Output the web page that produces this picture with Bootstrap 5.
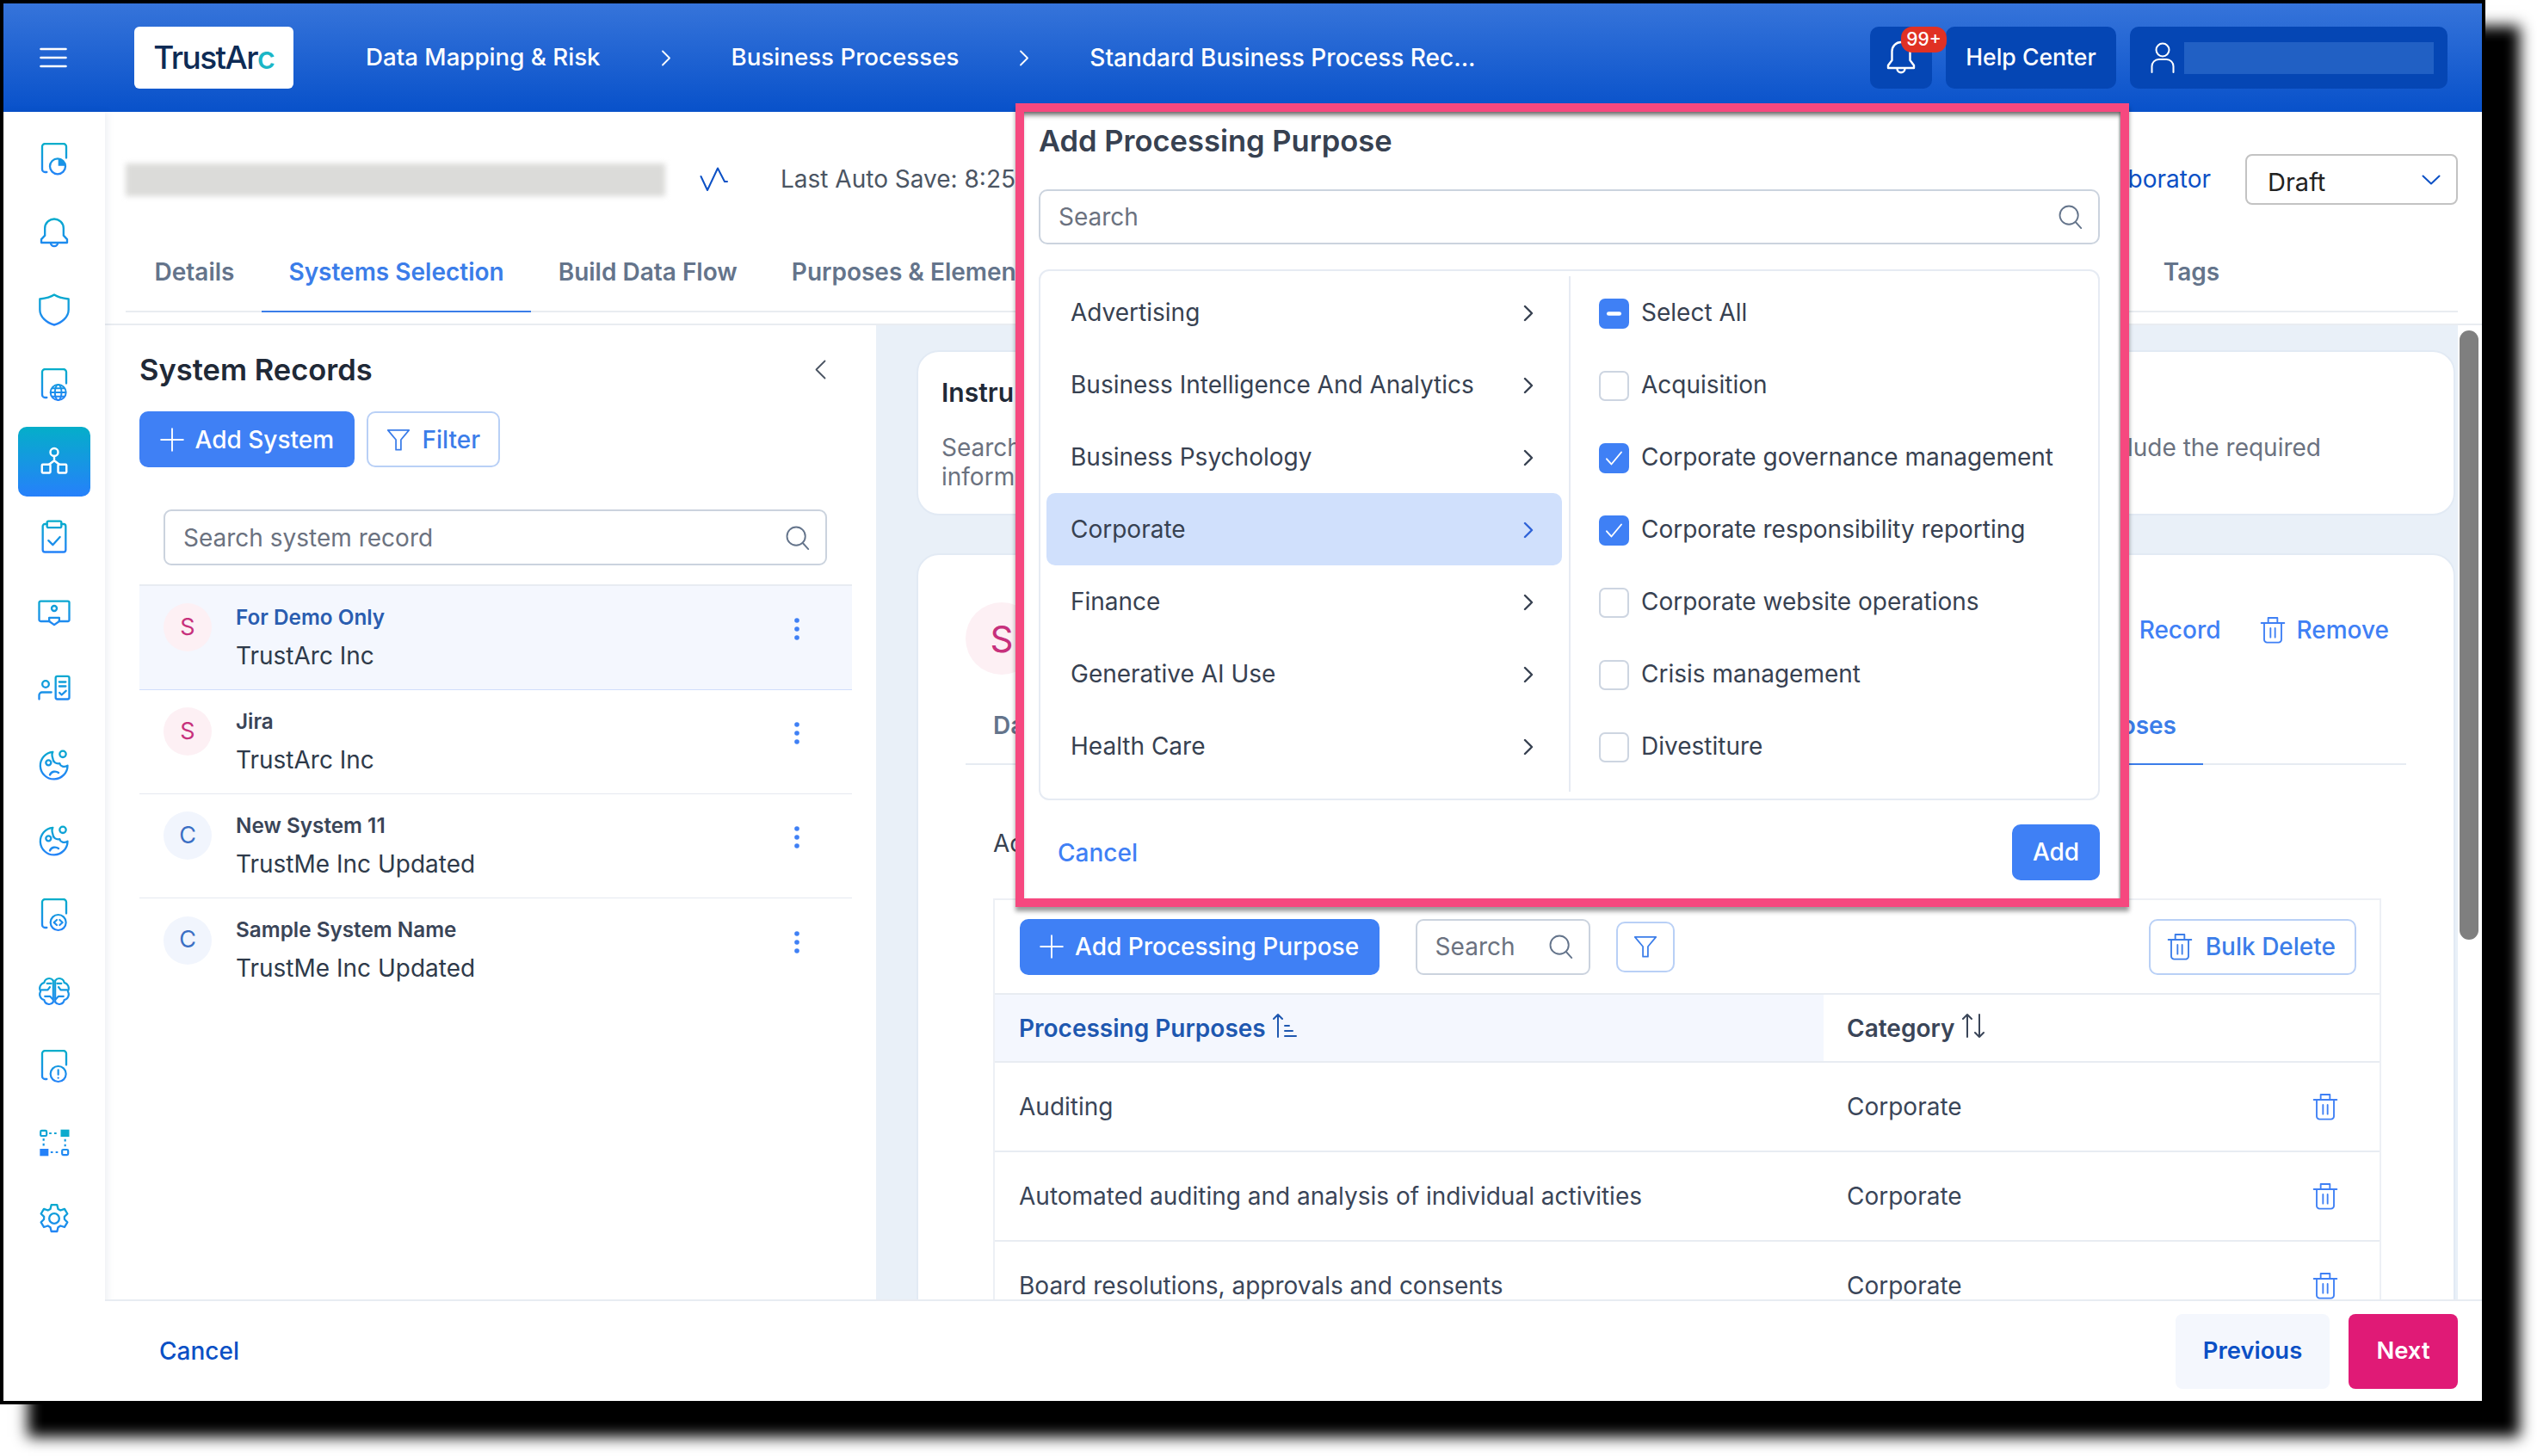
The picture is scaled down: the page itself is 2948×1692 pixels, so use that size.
<!DOCTYPE html>
<html lang="en">
<head>
  <meta charset="UTF-8" />
  <meta name="viewport" content="width=device-width, initial-scale=1">
  <title>Add Processing Purpose</title>
  <link href="https://cdn.jsdelivr.net/npm/bootstrap@5.3.3/dist/css/bootstrap.min.css" rel="stylesheet">
  <style>
    html, body { height: 100%; overflow: hidden; }
    body { background: #fff; font-family: Inter, "Noto Sans", sans-serif; font-size: 28px; color: #374151; }
    svg { display: block; flex: none; }
    .ln { fill: none; stroke: currentColor; stroke-linecap: round; stroke-linejoin: round; }
    .sprite { width: 0; height: 0; }
    .to-end { display: flex; justify-content: flex-end; white-space: nowrap; }

    .shot { width: 2888px; height: 1632px; border: 4px solid #000; box-shadow: 36px 34px 16px 4px #000; position: relative; background: #fff; overflow: hidden; }

    .topbar { height: 126px; background: linear-gradient(#3674da, #0851ca); padding: 0 40px 0 42px; color: #fff; font-weight: 500; font-size: 27.7px; }
    .crumb-last { font-size: 28px; }
    .logo-tile { width: 185px; height: 72px; margin: 0 84px 0 78px; background: #fff; border-radius: 6px; color: #0d2b55; font-size: 37px; letter-spacing: -1.6px; font-weight: 500; }
    .logo-tile b { font-weight: 500; color: #1bb6c6; }
    .crumb-sep { margin: 0 70px; }
    .bar-btn { height: 72px; background: #0546b4; border-radius: 10px; color: #fff; border: 0; font-size: 26.6px; font-weight: 500; }
    .bar-bell { width: 72px; margin-right: 16px; }
    .bar-help { width: 198px; margin-right: 16px; }
    .bar-user { width: 369px; padding-left: 24px; gap: 11px; }
    .user-blur { width: 290px; height: 37px; background: #2160c4; }
    .bar-btn .bell-count { position: absolute; top: 0; left: 36px; width: 53px; height: 30px; padding: 0; line-height: 30px; font-size: 21px; font-weight: 500; background: #e03124; border-radius: 13px; }

    .body-row { height: 1498px; }
    .rail { width: 118px; flex: none; background: #fff; padding-top: 14px; box-shadow: 3px 0 8px rgba(40, 60, 110, .08); position: relative; z-index: 1; }
    .rail-item { height: 88px; }
    .rail-item:first-child { height: 84px; }
    .rail-on { width: 84px; height: 81px; border-radius: 10px; background: linear-gradient(#05aec9, #2680fb); }

    .work { min-width: 0; }
    .head-zone { height: 248px; padding: 49px 28px 0 24px; border-bottom: 2px solid #e9ecf1; }
    .title-row { height: 59px; }
    .title-blur { width: 627px; height: 38px; background: #dbdbd9; filter: blur(3px); margin-right: 40px; flex: none; }
    .save-text { margin-left: 61px; flex: none; color: #4b5563; white-space: nowrap; margin-top: -2px; }
    .collab { margin-left: auto; margin-right: 40px; color: #0b50c5; margin-top: -2px; }
    .draft { width: 247px; height: 59px; border: 2px solid #c3c3c3; border-radius: 8px; padding: 7px 18px 0 24px; color: #222; font-size: 29px; }
    .draft svg { margin-top: -6px; color: #0b50c5; }

    .tabs-x { margin-top: 32px; height: 93px; padding-left: 2px; border-bottom: 2px solid #e9ecf1; flex-wrap: nowrap; }
    .tabs-x .nav-link { padding: 0 31.5px; height: 93px; line-height: 92px; color: #64748b; font-weight: 600; font-size: 28px; white-space: nowrap; border-bottom: 2px solid transparent; border-radius: 0; }
    .tabs-x .nav-link.active { color: #3b7de9; border-bottom-color: #3b7de9; }
    .tab-cut { width: 292px; flex: none; }
    .tab-far { margin-left: 1302px; }

    .split { height: 1132px; min-height: 0; }
    .side { width: 896px; flex: none; padding: 21px 28px 0 40px; background: #fff; }
    .side h2 { font-size: 34.5px; font-weight: 600; color: #1f2937; margin: 0; line-height: 56px; }
    .side-top { height: 61px; padding-right: 30px; margin-bottom: 18px; }
    .side-btns { gap: 14px; }
    .act-btn { height: 65px; border-radius: 10px; background: #3f80f5; border: 0; color: #fff; font-size: 28px; font-weight: 500; padding: 0 23.5px; gap: 13px; white-space: nowrap; }
    .ghost-btn { height: 65px; border-radius: 10px; background: #fff; border: 2px solid #b9d0f6; color: #3b7de9; font-size: 28px; font-weight: 500; padding: 0 21px; gap: 14px; white-space: nowrap; }
    .find { border: 2px solid #cbd3de; border-radius: 9px; background: #fff; height: 65px; color: #6b7280; padding: 0 17px 0 21px; }
    .find input { border: 0; outline: 0; padding: 0; flex: 1; min-width: 0; background: transparent; font-size: 28px; color: #374151; }
    .find input::placeholder { color: #6b7280; opacity: 1; }
    .find svg { color: #64748b; }
    .side-find { width: 771px; margin: 49px 0 22px 28px; }

    .rec-list { border-top: 2px solid #e8ecf2; }
    .rec-item { height: 121px; border: 0; border-bottom: 2px solid #e5e9f0; border-radius: 0 !important; padding: 0 0 0 28px; background: #fff; gap: 28px; }
    .rec-item.picked { background: #f4f7fe; border-bottom-color: #d0defb; }
    .rec-ava { width: 56px; height: 56px; border-radius: 50%; font-size: 27px; margin-top: -24px; }
    .ava-s { background: #fdf0f4; color: #c7317c; }
    .ava-c { background: #f1f5fd; color: #3b6fc4; }
    .rec-name { font-size: 24.3px; font-weight: 600; color: #3a4558; line-height: 30px; margin-top: 3px; }
    .picked .rec-name { color: #2a5db0; }
    .rec-org { font-size: 28px; color: #2e3a4a; line-height: 44px; margin-top: 8px; }
    .rec-more { margin: 0 60px 20px auto; color: #3f80f5; }

    .pane { background: #e9f0f8; flex: 1; min-width: 0; padding: 29px 3px 0 47px; overflow: hidden; }
    .box-a { height: 192px; background: #fff; border: 2px solid #e2eaf4; border-radius: 26px; padding: 28px 154px 0 27px; margin-bottom: 44px; }
    .box-a-start { white-space: nowrap; }
    .box-a h3 { font-size: 30px; font-weight: 600; margin: 0 0 28px; color: #1f2937; line-height: 38px; }
    .box-a p { margin: 0; font-size: 28px; line-height: 34px; color: #6b7280; }
    .box-a-end { margin-top: 66px; }
    .box-b { height: 1000px; background: #fff; border: 2px solid #e2eaf4; border-radius: 26px; padding: 55px 55px 0 55px; }
    .rec-head { height: 84px; padding-right: 20px; }
    .big-ava { width: 84px; height: 84px; border-radius: 50%; font-size: 42px; margin-right: auto; }
    .head-link { color: #3f80f5; font-weight: 500; font-size: 28px; gap: 12px; margin-left: 44px; margin-bottom: 20px; }
    .inner-tabs { height: 91px; margin-top: 14px; border-bottom: 2px solid #e6ebf2; flex-wrap: nowrap; }
    .inner-tabs .nav-link { padding: 0 0 0 32px; height: 91px; line-height: 90px; color: #64748b; font-weight: 600; font-size: 28px; border-bottom: 2px solid transparent; border-radius: 0; white-space: nowrap; }
    .inner-tabs .nav-link.active { color: #3b7de9; border-bottom-color: #3b7de9; padding: 0 31px 0 0; }
    .inner-far { width: 87px; margin-left: auto; margin-right: 236px; }
    .lead-line { margin: 74px 0 47px 32px; line-height: 34px; }

    .pp-wrap { margin: 0 29px 0 32px; border: 2px solid #edf0f5; border-bottom: 0; }
    .pp-tools { height: 108px; padding: 0 27px 0 28.5px; gap: 42px; }
    .pp-tools .find { width: 203px; margin-right: -12px; }
    .pp-tools .ghost-icon { width: 68px; height: 59px; padding: 0; }
    .pp-tools .ms-auto { padding: 0 22px 0 18px; }
    .pp-table { margin: 0; table-layout: fixed; }
    .pp-table th, .pp-table td { vertical-align: middle; padding: 0 0 0 27px; font-size: 28px; font-weight: 400; color: #3a4558; border-bottom: 2px solid #e8ecf2; box-shadow: none; }
    .pp-table th svg { margin-top: -6px; }
    .pp-table thead tr { height: 79px; }
    .pp-table thead th { font-weight: 600; border-top: 2px solid #e8ecf2; }
    .pp-table tbody tr { height: 104px; }
    .pp-table .c-one { width: 963px; padding-left: 28px; }
    .pp-table .c-end { width: 118px; color: #3f80f5; padding-left: 39px; }
    .pp-table th.sort-on { background: #f4f7fe; color: #1e58b0; }

    .scroll-strip { width: 28px; flex: none; background: #fff; padding: 6px 4px 0 2px; }
    .scroll-thumb { height: 708px; background: #7f7f7f; border-radius: 11px; }

    .foot { height: 118px; background: #fff; border-top: 2px solid #e8ecf2; padding: 0 28px 0 63px; position: relative; z-index: 1; }
    .foot-cancel { color: #0b50c5; font-weight: 500; font-size: 28px; text-decoration: none; }
    .foot-prev { width: 179px; height: 87px; margin-right: 22px; border: 0; background: #f4f7fd; color: #0b50c5; border-radius: 8px; font-size: 27.4px; font-weight: 600; }
    .foot-next { width: 127px; height: 87px; border: 0; background: #e01a76; color: #fff; border-radius: 8px; font-size: 27.4px; font-weight: 600; }

    .pp-dialog { position: absolute; left: 1176px; top: 116px; width: 1294px; height: 934px; z-index: 5; background: #fff; border: 10px solid #f6487f; border-radius: 0; padding: 0 24px 0 17px; box-shadow: inset 0 7px 6px -4px #555, inset -3px 0 3px -2px #888, 0 5px 5px rgba(0, 0, 0, .4); }
    .pp-dialog h5 { font-size: 34.5px; font-weight: 600; color: #374151; margin: 0; height: 90px; line-height: 68px; }
    .pp-dialog .find { height: 64px; border-radius: 10px; }
    .pick-box { height: 617px; margin-top: 29px; border: 2px solid #e6ebf3; border-radius: 12px; padding: 6px 0 8px; }
    .pick-left { width: 616px; flex: none; border-right: 2px solid #e6ebf3; padding: 0 8px 11px 7px; }
    .pick-cat { height: 84px; padding: 0 33px 0 28px; border-radius: 10px; color: #374151; font-size: 28px; border: 0; background: transparent; }
    .pick-cat svg { margin-top: 2px; }
    .pick-cat.on { background: #d0e0fc; }
    .pick-cat.on svg { color: #2f63d8; }
    .pick-opt { height: 84px; padding-left: 33px; gap: 14px; margin: 0; font-size: 28px; color: #374151; }
    .pick-opt .form-check-input { width: 35px; height: 35px; margin: 2px 0 0; flex: none; border: 2px solid #cdd5e1; border-radius: 7px; background-color: #fff; }
    .pick-opt .form-check-input:checked, .pick-opt .form-check-input:indeterminate { background-color: #3f80f5; border-color: #3f80f5; }
    .pick-opt .form-check-input:checked[type=checkbox] { --bs-form-check-bg-image: url("data:image/svg+xml,%3csvg xmlns='http://www.w3.org/2000/svg' viewBox='0 0 20 20'%3e%3cpath fill='none' stroke='%23fff' stroke-width='1.2' stroke-linecap='round' stroke-linejoin='round' d='M4.5 10.5l3.5 4 7.5-9'/%3e%3c/svg%3e"); }
    .dialog-foot { height: 120px; }
    .dialog-cancel { color: #3f80f5; font-weight: 500; text-decoration: none; margin: 2px 0 0 22px; }
    .dialog-add { width: 102px; height: 65px; background: #3f80f5; color: #fff; border: 0; border-radius: 10px; font-weight: 500; font-size: 28px; }
  </style>
</head>
<body>
  <svg class="sprite" aria-hidden="true">
    <defs>
      <linearGradient id="railInk" gradientUnits="userSpaceOnUse" x1="0" y1="0" x2="0" y2="24">
        <stop offset="0" stop-color="#05aec9"/><stop offset="1" stop-color="#2680fb"/>
      </linearGradient>
      <symbol id="i-chev" viewBox="0 0 12 20"><path class="ln" d="M2 2l8 8-8 8"/></symbol>
      <symbol id="i-find" viewBox="0 0 24 24"><circle class="ln" cx="10.5" cy="10.5" r="8.5" stroke-width="1.5"/><path class="ln" stroke-width="1.5" d="M16.8 17l5 5.5"/></symbol>
      <symbol id="i-funnel" viewBox="0 0 24 24"><path class="ln" stroke-width="1.5" d="M1.500 2.500h21l-8 9.500v10h-5V12z"/></symbol>
      <symbol id="i-plus" viewBox="0 0 24 24"><path class="ln" stroke-width="1.6" d="M12 1v22M1 12h22"/></symbol>
      <symbol id="i-bin" viewBox="0 0 24 24"><path class="ln" stroke-width="1.4" d="M2 6h20M8 6V1.500h8V6M4.500 6h15v14.500a2.500 2.500 0 0 1-2.500 2.500H7a2.500 2.500 0 0 1-2.500-2.500zM10 10.500v8M14 10.500v8"/></symbol>
      <symbol id="i-dots" viewBox="0 0 8 28"><circle cx="4" cy="4" r="2.800" fill="currentColor"/><circle cx="4" cy="14" r="2.800" fill="currentColor"/><circle cx="4" cy="24" r="2.800" fill="currentColor"/></symbol>
      <symbol id="i-doc" viewBox="0 0 24 24"><path fill="none" stroke="url(#railInk)" stroke-width="1.400" stroke-linecap="round" d="M6.800 20.400H5.600a2 2 0 0 1-2-2V2.600a2 2 0 0 1 2-2h12.800a2 2 0 0 1 2 2V10.500"/></symbol>
    </defs>
  </svg>

  <div class="shot">
    <header class="topbar d-flex align-items-center">
      <svg width="32" height="24" viewBox="0 0 32 24"><path class="ln" stroke-width="2.600" d="M1.500 2h29M1.500 12h29M1.500 22h29"/></svg>
      <div class="logo-tile d-flex align-items-center justify-content-center">TrustAr<b>c</b></div>
      <span>Data Mapping &amp; Risk</span>
      <svg class="crumb-sep" width="12" height="21"><use href="#i-chev" stroke-width="1.800"/></svg>
      <span>Business Processes</span>
      <svg class="crumb-sep" width="12" height="21"><use href="#i-chev" stroke-width="1.800"/></svg>
      <span class="crumb-last">Standard Business Process Rec...</span>
      <button class="btn bar-btn bar-bell ms-auto position-relative d-flex align-items-center justify-content-center p-0">
        <svg width="36" height="42" viewBox="0 0 24 28"><path class="ln" stroke-width="1.600" d="M12 2a7 7 0 0 0-7 7v7l-3 4v2h20v-2l-3-4V9a7 7 0 0 0-7-7zM9 22.500a3 3 0 0 0 6 0"/></svg>
        <span class="badge bell-count">99+</span>
      </button>
      <button class="btn bar-btn bar-help p-0">Help Center</button>
      <button class="btn bar-btn bar-user d-flex align-items-center">
        <svg width="28" height="36" viewBox="0 0 28 36"><circle class="ln" cx="14" cy="9" r="7.500" stroke-width="2"/><path class="ln" stroke-width="2" d="M1.500 35V28a8 8 0 0 1 8-8h9a8 8 0 0 1 8 8v7"/></svg>
        <span class="user-blur"></span>
      </button>
    </header>

    <div class="body-row d-flex">
      <nav class="rail d-flex flex-column align-items-center">
        <div class="rail-item d-flex align-items-center"><svg width="40" height="40" viewBox="0 0 24 24"><use href="#i-doc"/><g fill="none" stroke="url(#railInk)" stroke-width="1.400"><circle cx="14.400" cy="16.400" r="5.400"/></g><path fill="url(#railInk)" d="M14.800 16h5a5 5 0 0 0-5-5z"/></svg></div>
        <div class="rail-item d-flex align-items-center"><svg width="40" height="40" viewBox="0 0 24 24"><path fill="none" stroke="url(#railInk)" stroke-width="1.400" stroke-linejoin="round" d="M12 1.500a6.500 6.500 0 0 0-6.500 6.500v5L3 15.700v2.300h18v-2.300L18.500 13V8A6.500 6.500 0 0 0 12 1.500zM9.500 18a2.500 2.500 0 0 0 5 0"/></svg></div>
        <div class="rail-item d-flex align-items-center"><svg width="40" height="40" viewBox="0 0 24 24"><path fill="none" stroke="url(#railInk)" stroke-width="1.400" stroke-linejoin="round" d="M12 1.500C9 3.500 6 4 2 4.500V12c0 5 4.500 9 10 10.500C17.500 21 22 17 22 12V4.500C18 4 15 3.500 12 1.500z"/></svg></div>
        <div class="rail-item d-flex align-items-center"><svg width="40" height="40" viewBox="0 0 24 24"><use href="#i-doc"/><g fill="none" stroke="url(#railInk)" stroke-width="1.200"><circle cx="14.800" cy="16.800" r="5.400"/><ellipse cx="14.800" cy="16.800" rx="2.300" ry="5.400"/><path d="M9.400 16.800h10.800M10.200 14h9.200M10.200 19.600h9.200"/></g></svg></div>
        <div class="rail-item d-flex align-items-center"><div class="rail-on d-flex align-items-center justify-content-center"><svg width="36" height="36" viewBox="0 0 24 24" color="#fff"><g class="ln" stroke-width="1.600"><circle cx="12" cy="5" r="3"/><rect x="2.500" y="14.500" width="6.500" height="6.500" rx=".6"/><rect x="15" y="14.500" width="6.500" height="6.500" rx=".6"/><path d="M12 8v3.500M12 11.500l-4 3M12 11.500l4 3"/></g></svg></div></div>
        <div class="rail-item d-flex align-items-center"><svg width="40" height="40" viewBox="0 0 24 24"><g fill="none" stroke="url(#railInk)" stroke-width="1.400" stroke-linecap="round" stroke-linejoin="round"><path d="M7 3H5.500a1.500 1.500 0 0 0-1.500 1.500v16.500A1.500 1.500 0 0 0 5.500 22.500h13a1.500 1.500 0 0 0 1.500-1.500V4.500A1.500 1.500 0 0 0 18.500 3H17"/><rect x="7" y="1" width="10" height="4.500" rx="1"/><path d="M8 14.500l3 3 5-5.500"/></g></svg></div>
        <div class="rail-item d-flex align-items-center"><svg width="40" height="40" viewBox="0 0 24 24"><g fill="none" stroke="url(#railInk)" stroke-width="1.400" stroke-linecap="round" stroke-linejoin="round"><path d="M8.500 18H2.500a1 1 0 0 1-1-1V5a1 1 0 0 1 1-1h19a1 1 0 0 1 1 1v12a1 1 0 0 1-1 1h-6"/><circle cx="12" cy="9" r="1.800"/><path d="M8.500 15.500h7V18L12 20.500 8.500 18z"/></g></svg></div>
        <div class="rail-item d-flex align-items-center"><svg width="40" height="40" viewBox="0 0 24 24"><g fill="none" stroke="url(#railInk)" stroke-width="1.400" stroke-linecap="round" stroke-linejoin="round"><circle cx="6" cy="9" r="2.300"/><path d="M1.500 19.500v-2.800a2 2 0 0 1 2-2H10"/><rect x="13" y="3.500" width="9.500" height="16" rx="1.200"/><path d="M15.500 7.500h4.500M15.500 10.500h4.500M15.700 15l1.500 1.500 3-2.800"/></g></svg></div>
        <div class="rail-item d-flex align-items-center"><svg width="40" height="40" viewBox="0 0 24 24"><g fill="none" stroke="url(#railInk)" stroke-width="1.400" stroke-linecap="round" stroke-linejoin="round"><path d="M11 3.500A9.500 9.500 0 1 0 21.300 13c-2.500 1.500-5 .5-5.500-1.500-2.500.5-4.800-1-4.800-3.500-.5-1.500-1-3 0-4.500z"/><circle cx="8" cy="11" r="1.800"/><circle cx="18" cy="5" r="2.200"/><path d="M9 19.500c1-2.500 4-3 6-1.500"/></g></svg></div>
        <div class="rail-item d-flex align-items-center"><svg width="40" height="40" viewBox="0 0 24 24"><g fill="none" stroke="url(#railInk)" stroke-width="1.400" stroke-linecap="round" stroke-linejoin="round"><path d="M11 3.500A9.500 9.500 0 1 0 21.300 13c-2.500 1.500-5 .5-5.500-1.500-2.500.5-4.800-1-4.800-3.500-.5-1.500-1-3 0-4.500z"/><circle cx="8" cy="11" r="1.800"/><circle cx="18" cy="5" r="2.200"/><path d="M9 19.500c1-2.500 4-3 6-1.500"/></g></svg></div>
        <div class="rail-item d-flex align-items-center"><svg width="40" height="40" viewBox="0 0 24 24"><use href="#i-doc"/><g fill="none" stroke="url(#railInk)" stroke-width="1.300" stroke-linecap="round" stroke-linejoin="round"><circle cx="14.800" cy="16.800" r="5.400"/><path d="M13.800 15l-2 1.800 2 1.800M15.800 15l2 1.800-2 1.800"/></g></svg></div>
        <div class="rail-item d-flex align-items-center"><svg width="40" height="40" viewBox="0 0 24 24"><g fill="none" stroke="url(#railInk)" stroke-width="1.300" stroke-linecap="round" stroke-linejoin="round"><path d="M11.300 4.500a3.500 3.500 0 0 0-6.300 1.500A4 4 0 0 0 2.500 12 4 4 0 0 0 5 18a3.500 3.500 0 0 0 6.300 1.500zM12.700 4.500A3.500 3.500 0 0 1 19 6a4 4 0 0 1 2.500 6A4 4 0 0 1 19 18a3.500 3.500 0 0 1-6.300 1.500z"/><path d="M3 11h4.500l1.500-2M5.500 15.500H9l2 2M21 11h-4.500L15 9M18.500 15.500H15l-2 2M7 6.500h3M17 6.500h-3"/></g></svg></div>
        <div class="rail-item d-flex align-items-center"><svg width="40" height="40" viewBox="0 0 24 24"><use href="#i-doc"/><g fill="none" stroke="url(#railInk)" stroke-width="1.300" stroke-linecap="round"><circle cx="14.800" cy="16.800" r="5.400"/><path d="M14.800 14v3.300M14.800 19.500v.1"/></g></svg></div>
        <div class="rail-item d-flex align-items-center"><svg width="40" height="40" viewBox="0 0 24 24"><g fill="none" stroke="url(#railInk)" stroke-width="1.300"><rect x="2.500" y="3.500" width="4.200" height="3.700" rx=".8"/><rect x="17.500" y="16.800" width="4.200" height="3.700" rx=".8"/><path d="M8.500 5.400h1.600M12 5.400h1.600M9.500 18.600h1.600M13 18.600h1.600M4.600 9v1.600M4.600 12.500v1.600M19.600 9.500v1.600M19.600 13v1.600"/></g><rect x="16.500" y="2.800" width="6" height="5" fill="#0dabcd"/><rect x="2" y="16.200" width="6" height="5" fill="#2581f8"/></svg></div>
        <div class="rail-item d-flex align-items-center"><svg width="40" height="40" viewBox="0 0 24 24"><g fill="none" stroke="url(#railInk)" stroke-width="1.400" stroke-linejoin="round"><circle cx="12" cy="12" r="3.500"/><path d="M10 2.500h4l.7 2.900 1.700.9 2.800-1 2 3.400-2.100 2 .1 1.900 2 2-2 3.400-2.800-.9-1.700 1-.7 2.900h-4l-.7-2.900-1.700-1-2.800.9-2-3.400 2-2 .1-1.900-2.100-2 2-3.400 2.800 1 1.700-.9z"/></g></svg></div>
      </nav>

      <div class="work flex-grow-1 d-flex flex-column">
        <section class="head-zone">
          <div class="title-row d-flex align-items-center">
            <div class="title-blur"></div>
            <svg width="33" height="29" viewBox="0 0 33 29" color="#0b50c5"><path class="ln" stroke-width="2" d="M1.500 11L9 27 21 1.500l8 15.500h3"/></svg>
            <span class="save-text">Last Auto Save: 8:25</span>
            <span class="collab">borator</span>
            <div class="draft d-flex justify-content-between align-items-center">Draft <svg width="22" height="12" viewBox="0 0 22 12"><path class="ln" stroke-width="2" d="M1.500 1.500l9.500 9 9.500-9"/></svg></div>
          </div>
          <ul class="nav tabs-x">
            <li class="nav-item"><a class="nav-link" href="#">Details</a></li>
            <li class="nav-item"><a class="nav-link active" href="#">Systems Selection</a></li>
            <li class="nav-item"><a class="nav-link" href="#">Build Data Flow</a></li>
            <li class="nav-item tab-cut"><a class="nav-link" href="#">Purposes &amp; Elemen</a></li>
            <li class="nav-item tab-far"><a class="nav-link" href="#">Tags</a></li>
          </ul>
        </section>

        <div class="split d-flex">
          <aside class="side">
            <div class="side-top d-flex justify-content-between align-items-center">
              <h2>System Records</h2>
              <svg width="13" height="23" viewBox="0 0 13 23" color="#4b5563"><path class="ln" stroke-width="1.800" d="M11.500 1.500l-10 10 10 10"/></svg>
            </div>
            <div class="d-flex side-btns">
              <button class="btn act-btn d-flex align-items-center"><svg width="28" height="28"><use href="#i-plus"/></svg>Add System</button>
              <button class="btn ghost-btn d-flex align-items-center"><svg width="28" height="28"><use href="#i-funnel"/></svg>Filter</button>
            </div>
            <div class="find side-find d-flex align-items-center"><input type="text" placeholder="Search system record"><svg width="30" height="30"><use href="#i-find"/></svg></div>
            <div class="list-group list-group-flush rec-list">
              <div class="list-group-item rec-item picked d-flex align-items-center">
                <div class="rec-ava ava-s d-flex align-items-center justify-content-center">S</div>
                <div><div class="rec-name">For Demo Only</div><div class="rec-org">TrustArc Inc</div></div>
                <svg class="rec-more" width="8" height="28"><use href="#i-dots"/></svg>
              </div>
              <div class="list-group-item rec-item d-flex align-items-center">
                <div class="rec-ava ava-s d-flex align-items-center justify-content-center">S</div>
                <div><div class="rec-name">Jira</div><div class="rec-org">TrustArc Inc</div></div>
                <svg class="rec-more" width="8" height="28"><use href="#i-dots"/></svg>
              </div>
              <div class="list-group-item rec-item d-flex align-items-center">
                <div class="rec-ava ava-c d-flex align-items-center justify-content-center">C</div>
                <div><div class="rec-name">New System 11</div><div class="rec-org">TrustMe Inc Updated</div></div>
                <svg class="rec-more" width="8" height="28"><use href="#i-dots"/></svg>
              </div>
              <div class="list-group-item rec-item d-flex align-items-center">
                <div class="rec-ava ava-c d-flex align-items-center justify-content-center">C</div>
                <div><div class="rec-name">Sample System Name</div><div class="rec-org">TrustMe Inc Updated</div></div>
                <svg class="rec-more" width="8" height="28"><use href="#i-dots"/></svg>
              </div>
            </div>
          </aside>

          <main class="pane">
            <div class="box-a d-flex justify-content-between">
              <div class="box-a-start">
                <h3>Instru</h3>
                <p>Search</p>
                <p>inform</p>
              </div>
              <div class="box-a-end"><p class="to-end">lude the required</p></div>
            </div>
            <div class="box-b">
              <div class="rec-head d-flex align-items-center">
                <div class="big-ava ava-s d-flex align-items-center justify-content-center">S</div>
                <span class="head-link">Record</span>
                <span class="head-link d-flex align-items-center"><svg width="32" height="32"><use href="#i-bin"/></svg>Remove</span>
              </div>
              <ul class="nav inner-tabs">
                <li class="nav-item"><a class="nav-link" href="#">Da</a></li>
                <li class="nav-item inner-far"><a class="nav-link active to-end" href="#">oses</a></li>
              </ul>
              <p class="lead-line">Ac</p>
              <div class="pp-wrap">
                <div class="pp-tools d-flex align-items-center">
                  <button class="btn act-btn d-flex align-items-center"><svg width="28" height="28"><use href="#i-plus"/></svg>Add Processing Purpose</button>
                  <div class="find d-flex align-items-center"><input type="text" placeholder="Search"><svg width="30" height="30"><use href="#i-find"/></svg></div>
                  <button class="btn ghost-btn ghost-icon d-flex align-items-center justify-content-center"><svg width="28" height="28"><use href="#i-funnel"/></svg></button>
                  <button class="btn ghost-btn ms-auto d-flex align-items-center"><svg width="32" height="32"><use href="#i-bin"/></svg>Bulk Delete</button>
                </div>
                <table class="table pp-table">
                  <thead>
                    <tr>
                      <th class="c-one sort-on"><span class="d-inline-flex align-items-center gap-2">Processing Purposes <svg width="28" height="30" viewBox="0 0 28 30"><path class="ln" stroke-width="2" d="M6 28V2M1 7l5-5 5 5M14 15h5M14 21h9M14 27h13"/></svg></span></th>
                      <th><span class="d-inline-flex align-items-center gap-2">Category <svg width="28" height="30" viewBox="0 0 28 30"><path class="ln" stroke-width="2" d="M7 28V2M2 7l5-5 5 5M21 2v26M16 23l5 5 5-5"/></svg></span></th>
                      <th class="c-end"></th>
                    </tr>
                  </thead>
                  <tbody>
                    <tr><td class="c-one">Auditing</td><td>Corporate</td><td class="c-end"><svg width="32" height="32"><use href="#i-bin"/></svg></td></tr>
                    <tr><td class="c-one">Automated auditing and analysis of individual activities</td><td>Corporate</td><td class="c-end"><svg width="32" height="32"><use href="#i-bin"/></svg></td></tr>
                    <tr><td class="c-one">Board resolutions, approvals and consents</td><td>Corporate</td><td class="c-end"><svg width="32" height="32"><use href="#i-bin"/></svg></td></tr>
                  </tbody>
                </table>
              </div>
            </div>
          </main>
          <div class="scroll-strip"><div class="scroll-thumb"></div></div>
        </div>

        <footer class="foot d-flex align-items-center">
          <a class="foot-cancel me-auto" href="#">Cancel</a>
          <button class="btn foot-prev">Previous</button>
          <button class="btn foot-next">Next</button>
        </footer>
      </div>
    </div>

    <div class="pp-dialog">
      <h5>Add Processing Purpose</h5>
      <div class="find d-flex align-items-center"><input type="text" placeholder="Search"><svg width="30" height="30"><use href="#i-find"/></svg></div>
      <div class="pick-box d-flex">
        <div class="pick-left d-flex flex-column">
          <div class="pick-cat d-flex align-items-center justify-content-between">Advertising <svg width="12" height="20"><use href="#i-chev" stroke-width="2.400"/></svg></div>
          <div class="pick-cat d-flex align-items-center justify-content-between">Business Intelligence And Analytics <svg width="12" height="20"><use href="#i-chev" stroke-width="2.400"/></svg></div>
          <div class="pick-cat d-flex align-items-center justify-content-between">Business Psychology <svg width="12" height="20"><use href="#i-chev" stroke-width="2.400"/></svg></div>
          <div class="pick-cat on d-flex align-items-center justify-content-between">Corporate <svg width="12" height="20"><use href="#i-chev" stroke-width="2.400"/></svg></div>
          <div class="pick-cat d-flex align-items-center justify-content-between">Finance <svg width="12" height="20"><use href="#i-chev" stroke-width="2.400"/></svg></div>
          <div class="pick-cat d-flex align-items-center justify-content-between">Generative AI Use <svg width="12" height="20"><use href="#i-chev" stroke-width="2.400"/></svg></div>
          <div class="pick-cat d-flex align-items-center justify-content-between">Health Care <svg width="12" height="20"><use href="#i-chev" stroke-width="2.400"/></svg></div>
        </div>
        <div class="flex-grow-1">
          <label class="pick-opt d-flex align-items-center"><input class="form-check-input" type="checkbox" id="pickAll">Select All</label>
          <label class="pick-opt d-flex align-items-center"><input class="form-check-input" type="checkbox">Acquisition</label>
          <label class="pick-opt d-flex align-items-center"><input class="form-check-input" type="checkbox" checked>Corporate governance management</label>
          <label class="pick-opt d-flex align-items-center"><input class="form-check-input" type="checkbox" checked>Corporate responsibility reporting</label>
          <label class="pick-opt d-flex align-items-center"><input class="form-check-input" type="checkbox">Corporate website operations</label>
          <label class="pick-opt d-flex align-items-center"><input class="form-check-input" type="checkbox">Crisis management</label>
          <label class="pick-opt d-flex align-items-center"><input class="form-check-input" type="checkbox">Divestiture</label>
        </div>
      </div>
      <div class="dialog-foot d-flex align-items-center justify-content-between">
        <a class="dialog-cancel" href="#">Cancel</a>
        <button class="btn dialog-add p-0">Add</button>
      </div>
    </div>
  </div>
  <script>
    document.getElementById("pickAll").indeterminate = true;
  </script>
</body>
</html>
